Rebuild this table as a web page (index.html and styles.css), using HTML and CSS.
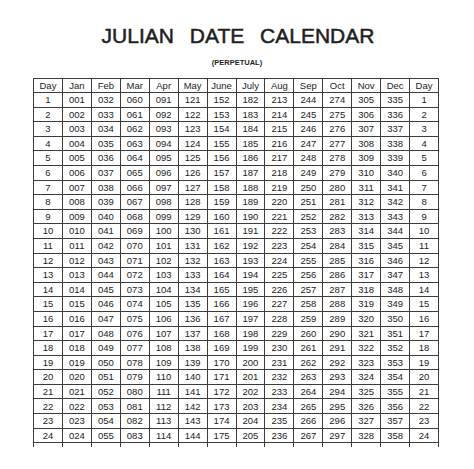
FILE: index.html
```html
<!DOCTYPE html>
<html>
<head>
<meta charset="utf-8">
<link rel="stylesheet" href="styles.css">
</head>
<body>
<h1 class="title">JULIAN DATE CALENDAR</h1>
<p class="subtitle">(PERPETUAL)</p>
<div class="cal">
<span>Day</span><span>Jan</span><span>Feb</span><span>Mar</span><span>Apr</span><span>May</span><span>June</span><span>July</span><span>Aug</span><span>Sep</span><span>Oct</span><span>Nov</span><span>Dec</span><span>Day</span>
<span>1</span><span>001</span><span>032</span><span>060</span><span>091</span><span>121</span><span>152</span><span>182</span><span>213</span><span>244</span><span>274</span><span>305</span><span>335</span><span>1</span>
<span>2</span><span>002</span><span>033</span><span>061</span><span>092</span><span>122</span><span>153</span><span>183</span><span>214</span><span>245</span><span>275</span><span>306</span><span>336</span><span>2</span>
<span>3</span><span>003</span><span>034</span><span>062</span><span>093</span><span>123</span><span>154</span><span>184</span><span>215</span><span>246</span><span>276</span><span>307</span><span>337</span><span>3</span>
<span>4</span><span>004</span><span>035</span><span>063</span><span>094</span><span>124</span><span>155</span><span>185</span><span>216</span><span>247</span><span>277</span><span>308</span><span>338</span><span>4</span>
<span>5</span><span>005</span><span>036</span><span>064</span><span>095</span><span>125</span><span>156</span><span>186</span><span>217</span><span>248</span><span>278</span><span>309</span><span>339</span><span>5</span>
<span>6</span><span>006</span><span>037</span><span>065</span><span>096</span><span>126</span><span>157</span><span>187</span><span>218</span><span>249</span><span>279</span><span>310</span><span>340</span><span>6</span>
<span>7</span><span>007</span><span>038</span><span>066</span><span>097</span><span>127</span><span>158</span><span>188</span><span>219</span><span>250</span><span>280</span><span>311</span><span>341</span><span>7</span>
<span>8</span><span>008</span><span>039</span><span>067</span><span>098</span><span>128</span><span>159</span><span>189</span><span>220</span><span>251</span><span>281</span><span>312</span><span>342</span><span>8</span>
<span>9</span><span>009</span><span>040</span><span>068</span><span>099</span><span>129</span><span>160</span><span>190</span><span>221</span><span>252</span><span>282</span><span>313</span><span>343</span><span>9</span>
<span>10</span><span>010</span><span>041</span><span>069</span><span>100</span><span>130</span><span>161</span><span>191</span><span>222</span><span>253</span><span>283</span><span>314</span><span>344</span><span>10</span>
<span>11</span><span>011</span><span>042</span><span>070</span><span>101</span><span>131</span><span>162</span><span>192</span><span>223</span><span>254</span><span>284</span><span>315</span><span>345</span><span>11</span>
<span>12</span><span>012</span><span>043</span><span>071</span><span>102</span><span>132</span><span>163</span><span>193</span><span>224</span><span>255</span><span>285</span><span>316</span><span>346</span><span>12</span>
<span>13</span><span>013</span><span>044</span><span>072</span><span>103</span><span>133</span><span>164</span><span>194</span><span>225</span><span>256</span><span>286</span><span>317</span><span>347</span><span>13</span>
<span>14</span><span>014</span><span>045</span><span>073</span><span>104</span><span>134</span><span>165</span><span>195</span><span>226</span><span>257</span><span>287</span><span>318</span><span>348</span><span>14</span>
<span>15</span><span>015</span><span>046</span><span>074</span><span>105</span><span>135</span><span>166</span><span>196</span><span>227</span><span>258</span><span>288</span><span>319</span><span>349</span><span>15</span>
<span>16</span><span>016</span><span>047</span><span>075</span><span>106</span><span>136</span><span>167</span><span>197</span><span>228</span><span>259</span><span>289</span><span>320</span><span>350</span><span>16</span>
<span>17</span><span>017</span><span>048</span><span>076</span><span>107</span><span>137</span><span>168</span><span>198</span><span>229</span><span>260</span><span>290</span><span>321</span><span>351</span><span>17</span>
<span>18</span><span>018</span><span>049</span><span>077</span><span>108</span><span>138</span><span>169</span><span>199</span><span>230</span><span>261</span><span>291</span><span>322</span><span>352</span><span>18</span>
<span>19</span><span>019</span><span>050</span><span>078</span><span>109</span><span>139</span><span>170</span><span>200</span><span>231</span><span>262</span><span>292</span><span>323</span><span>353</span><span>19</span>
<span>20</span><span>020</span><span>051</span><span>079</span><span>110</span><span>140</span><span>171</span><span>201</span><span>232</span><span>263</span><span>293</span><span>324</span><span>354</span><span>20</span>
<span>21</span><span>021</span><span>052</span><span>080</span><span>111</span><span>141</span><span>172</span><span>202</span><span>233</span><span>264</span><span>294</span><span>325</span><span>355</span><span>21</span>
<span>22</span><span>022</span><span>053</span><span>081</span><span>112</span><span>142</span><span>173</span><span>203</span><span>234</span><span>265</span><span>295</span><span>326</span><span>356</span><span>22</span>
<span>23</span><span>023</span><span>054</span><span>082</span><span>113</span><span>143</span><span>174</span><span>204</span><span>235</span><span>266</span><span>296</span><span>327</span><span>357</span><span>23</span>
<span>24</span><span>024</span><span>055</span><span>083</span><span>114</span><span>144</span><span>175</span><span>205</span><span>236</span><span>267</span><span>297</span><span>328</span><span>358</span><span>24</span>
<span></span><span></span><span></span><span></span><span></span><span></span><span></span><span></span><span></span><span></span><span></span><span></span><span></span><span></span>
</div>
</body>
</html>
```

FILE: styles.css
```css
html, body {
  margin: 0;
  padding: 0;
  background: #ffffff;
}
body {
  width: 474px;
  height: 469px;
  overflow: hidden;
  padding-top: 25px;
  box-sizing: border-box;
  font-family: "Liberation Sans", Arial, sans-serif;
  color: #1e1e1e;
}
.title {
  margin: 0;
  font-size: 21px;
  line-height: 21px;
  font-weight: normal;
  text-align: center;
  word-spacing: 10px;
  -webkit-text-stroke: 0.5px #1e1e1e;
  padding-left: 2px;
}
.subtitle {
  margin: 13px 0 0;
  font-size: 7.5px;
  line-height: 8px;
  font-weight: bold;
  text-align: center;
}
.cal {
  margin: 11px 0 0 33px;
  width: 406px;
  box-sizing: border-box;
  display: grid;
  grid-template-columns: repeat(14, 1fr);
  grid-template-rows: 13px repeat(24, 13.6px) 4px;
  gap: 1px;
  padding: 1px 1px 0;
  background: #3c3c3c;
}
.cal > span {
  background: #ffffff;
  display: flex;
  align-items: center;
  justify-content: center;
  font-size: 9.5px;
  line-height: 1;
  color: #222222;
}
```
